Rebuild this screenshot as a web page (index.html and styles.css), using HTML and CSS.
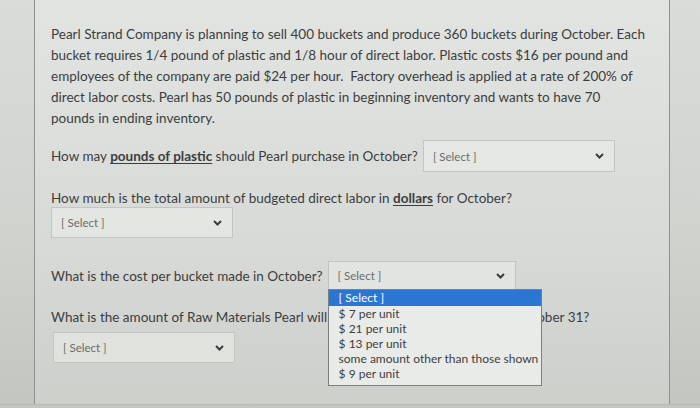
FILE: index.html
```html
<!DOCTYPE html>
<html lang="en">
  <head>
    <meta charset="UTF-8" />
    <meta name="viewport" content="width=device-width, initial-scale=1.0" />
    <title>Budget Quiz</title>

    <link rel="stylesheet" href="styles.css">
  </head>
  <body>
    <div class="page">
      <div class="question">
        <p class="intro">
          Pearl Strand Company is planning to sell 400 buckets and produce 360 buckets during October. Each<br>
          bucket requires 1/4 pound of plastic and 1/8 hour of direct labor. Plastic costs $16 per pound and<br>
          employees of the company are paid $24 per hour.&nbsp; Factory overhead is applied at a rate of 200% of<br>
          direct labor costs. Pearl has 50 pounds of plastic in beginning inventory and wants to have 70<br>
          pounds in ending inventory.
        </p>

        <div class="row q1">
          <span>How may <u>pounds of plastic</u> should Pearl purchase in October?</span>
          <div class="select wide">
            <span>[ Select ]</span>
            <svg class="chev" width="9" height="6" viewBox="0 0 9 6"><polyline points="1,1 4.5,4.5 8,1" /></svg>
          </div>
        </div>

        <div class="block q2">
          <div class="label">How much is the total amount of budgeted direct labor in <u>dollars</u> for October?</div>
          <div class="select short">
            <span>[ Select ]</span>
            <svg class="chev" width="9" height="6" viewBox="0 0 9 6"><polyline points="1,1 4.5,4.5 8,1" /></svg>
          </div>
        </div>

        <div class="row q3">
          <span>What is the cost per bucket made in October?</span>
          <div class="select mid open">
            <span>[ Select ]</span>
            <svg class="chev" width="9" height="6" viewBox="0 0 9 6"><polyline points="1,1 4.5,4.5 8,1" /></svg>
            <ul class="menu">
              <li class="active">[ Select ]</li>
              <li>$ 7 per unit</li>
              <li>$ 21 per unit</li>
              <li>$ 13 per unit</li>
              <li>some amount other than those shown</li>
              <li>$ 9 per unit</li>
            </ul>
          </div>
        </div>

        <div class="block q4">
          <div class="label">What is the amount of Raw Materials Pearl will have in its ending inventory on October 31?</div>
          <div class="select short">
            <span>[ Select ]</span>
            <svg class="chev" width="9" height="6" viewBox="0 0 9 6"><polyline points="1,1 4.5,4.5 8,1" /></svg>
          </div>
        </div>
      </div>
    </div>
  </body>
</html>
```

FILE: styles.css
```css
* {
  box-sizing: border-box;
}

body {
  margin: 0;
  height: 408px;
  overflow: hidden;
  font-family: Lato, "Open Sans", sans-serif;
  color: #3b3e40;
  background: linear-gradient(180deg, #dadcd9 0%, #d0d2ce 60%, #c3c5c1 100%);
}

.page {
  height: 405px;
  padding: 0 30px 0 34px;
  border-bottom: 1px solid #b9bbb7;
}

.question {
  height: 100%;
  padding: 24px 16px 0 16px;
  border-left: 1px solid #8e918d;
  border-right: 1px solid #8e918d;
  background: linear-gradient(180deg, #e2e4e1 0%, #d9dbd8 55%, #cdcfcb 100%);
  font-size: 13.5px;
}

.intro {
  margin: 0;
  line-height: 21px;
  white-space: nowrap;
}

u {
  font-weight: bold;
  text-decoration-thickness: 1px;
  text-underline-offset: 2px;
}

.row {
  display: flex;
  align-items: center;
  gap: 5px;
}

.label {
  line-height: 18px;
  white-space: nowrap;
}

.select {
  position: relative;
  display: flex;
  align-items: center;
  justify-content: space-between;
  padding: 0 10px 0 9px;
  border: 1px solid #c3c5c1;
  background: rgba(236, 238, 235, 0.55);
  font-size: 11.5px;
  color: #6a6c6a;
}

.chev polyline {
  fill: none;
  stroke: #3a3c3e;
  stroke-width: 2;
}

.wide {
  width: 192px;
  height: 32px;
}

.short {
  width: 182px;
  height: 31px;
}

.mid {
  width: 188px;
  height: 29px;
}

.q1 {
  margin-top: 11px;
}

.q2 {
  margin-top: 17px;
}

.q3 {
  margin-top: 23px;
}

.q4 {
  margin-top: 18px;
}

.q4 .select {
  margin-top: 6px;
  margin-left: 2px;
}

/* open dropdown list */
.menu {
  position: absolute;
  top: 100%;
  left: -1px;
  width: 214px;
  margin: 0;
  padding: 0 0 4px 0;
  list-style: none;
  border: 1px solid #7d807c;
  background: #e9ebe8;
  font-size: 12px;
  color: #3f4143;
  z-index: 2;
}

.menu li {
  height: 15px;
  line-height: 15px;
  padding-left: 10px;
  white-space: nowrap;
}

.menu li.active {
  height: 16px;
  background: #2b76d2;
  color: #fff;
}
```
